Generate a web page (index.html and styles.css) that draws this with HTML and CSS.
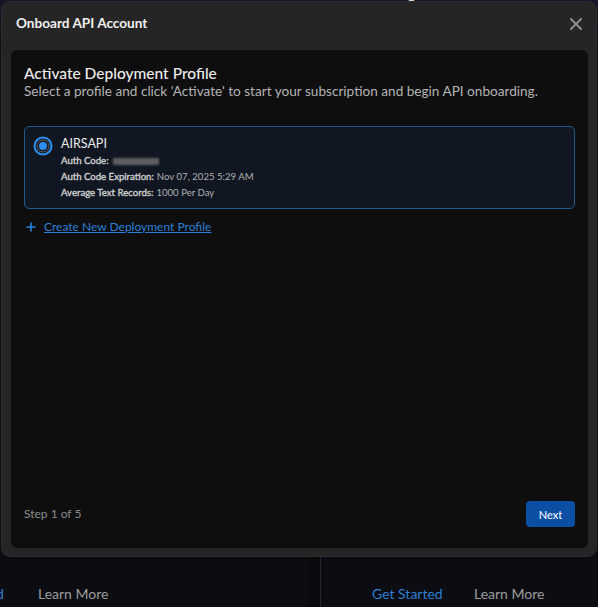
FILE: index.html
```html
<!DOCTYPE html>
<html>
<head>
<meta charset="utf-8">
<link rel="stylesheet" href="styles.css">
</head>
<body>
<div class="page">
  <div class="bg-heading">Start Your Trial Today With API</div>
  <div class="bg-spacer"></div>
  <div class="bg-bottom">
    <div class="bg-col bg-col-left">
      <span class="bg-link">d</span>
      <span class="bg-muted">Learn More</span>
    </div>
    <div class="bg-col bg-col-right">
      <span class="bg-link">Get Started</span>
      <span class="bg-muted">Learn More</span>
    </div>
  </div>
</div>

<div class="modal">
  <div class="modal-header">
    <div class="modal-title">Onboard API Account</div>
    <svg class="close" width="12" height="12" viewBox="0 0 12 12">
      <path d="M1 1 L11 11 M11 1 L1 11" stroke="#8c8c8c" stroke-width="2" stroke-linecap="square"/>
    </svg>
  </div>
  <div class="panel">
    <div class="panel-body">
      <div class="panel-title">Activate Deployment Profile</div>
      <div class="panel-sub">Select a profile and click 'Activate' to start your subscription and begin API onboarding.</div>

      <div class="card">
        <svg class="radio" width="20" height="20" viewBox="0 0 20 20">
          <circle cx="10" cy="10" r="8.5" fill="#15181f" stroke="#2b8ff0" stroke-width="2"/>
          <circle cx="10" cy="10" r="6" fill="#15181f" stroke="#5a6270" stroke-width="1"/>
          <circle cx="10" cy="10" r="4" fill="#2b8ff0"/>
        </svg>
        <div class="card-info">
          <div class="card-name">AIRSAPI</div>
          <div class="card-row"><span class="lbl">Auth Code:</span><span class="blur"></span></div>
          <div class="card-row"><span class="lbl">Auth Code Expiration:</span><span class="val">Nov 07, 2025 5:29 AM</span></div>
          <div class="card-row"><span class="lbl">Average Text Records:</span><span class="val">1000 Per Day</span></div>
        </div>
      </div>

      <div class="create">
        <svg class="plus" width="10" height="10" viewBox="0 0 10 10">
          <path d="M5 0.5 V9.5 M0.5 5 H9.5" stroke="#2a80d6" stroke-width="1.6"/>
        </svg>
        <span class="create-link">Create New Deployment Profile</span>
      </div>
    </div>
    <div class="panel-footer">
      <span class="step">Step 1 of 5</span>
      <button class="next">Next</button>
    </div>
  </div>
</div>
</body>
</html>
```
FILE: styles.css
```css
* { box-sizing: border-box; }
html, body { margin: 0; padding: 0; }
body {
  width: 598px;
  height: 607px;
  overflow: hidden;
  background: #0c0d13;
  font-family: Lato, "Open Sans", sans-serif;
  position: relative;
}
.page {
  width: 598px;
  height: 607px;
  display: flex;
  flex-direction: column;
  background: linear-gradient(#15162a 0, #0c0d13 60px);
}
.bg-heading {
  margin-top: -40px;
  margin-left: 14px;
  font-size: 44px;
  font-weight: 700;
  color: #d8d8d8;
  white-space: nowrap;
  line-height: 44px;
  height: 44px;
  overflow: hidden;
}
.bg-spacer { flex: 1; }
.bg-bottom {
  height: 51px;
  display: flex;
}
.bg-col {
  display: flex;
  align-items: flex-start;
  font-size: 14px;
  line-height: 17px;
  padding-top: 29px;
}
.bg-col-left {
  width: 320px;
  border-right: 13px solid #0a0a0e;
}
.bg-col-left .bg-link { margin-left: -4px; width: 42px; }
.bg-col-right {
  flex: 1;
  border-left: 1px solid #26272e;
  padding-left: 51px;
}
.bg-col-right .bg-link { width: 102px; }
.bg-link { color: #2f7fd2; }
.bg-muted { color: #9c9c9c; }

.modal {
  position: absolute;
  left: 2px;
  top: 2px;
  width: 594px;
  height: 554px;
  background: #252525;
  border-radius: 8px;
  display: flex;
  flex-direction: column;
  padding: 0 8px 8px 9px;
  box-shadow: 0 0 0 1px #2c2c2c;
}
.modal-header {
  height: 48px;
  display: flex;
  align-items: center;
  justify-content: space-between;
  padding-left: 5px;
  padding-right: 6px;
}
.modal-title {
  color: #f0f0f0;
  font-size: 13.6px;
  font-weight: 700;
  margin-top: -6px;
}
.close { margin-top: -4px; }
.panel {
  flex: 1;
  background: #0e0e0e;
  border-radius: 6px;
  display: flex;
  flex-direction: column;
  justify-content: space-between;
  padding: 13px 13px 21px 13px;
}
.panel-title {
  color: #ececec;
  font-size: 15.5px;
  font-weight: 500;
  line-height: 20px;
}
.panel-sub {
  color: #b4b4b4;
  font-size: 13.6px;
  line-height: 16px;
}
.card {
  margin-top: 27px;
  height: 83px;
  background: #111722;
  border: 1px solid #1f5a8a;
  border-radius: 5px;
  display: flex;
  align-items: flex-start;
  padding: 8px 8px 0 8px;
}
.radio { margin-top: 1px; flex: none; }
.card-info { margin-left: 8px; }
.card-name {
  color: #ededed;
  font-size: 12.5px;
  line-height: 18px;
}
.card-row {
  display: flex;
  align-items: center;
  font-size: 9.6px;
  line-height: 16px;
  height: 16px;
}
.lbl {
  color: #d0d0d0;
  font-weight: 400;
  -webkit-text-stroke: 0.35px #d0d0d0;
  margin-right: 3px;
}
.val { color: #b0b0b0; }
.blur {
  display: inline-block;
  width: 46px;
  height: 7px;
  background: #5e5e62;
  filter: blur(1.2px);
  margin-left: 1px;
}
.create {
  display: flex;
  align-items: center;
  margin-top: 10px;
  padding-left: 2px;
}
.plus { margin-top: 1px; }
.create-link {
  color: #2a80d6;
  font-size: 12px;
  text-decoration: underline;
  margin-left: 8px;
}
.panel-footer {
  display: flex;
  align-items: center;
  justify-content: space-between;
}
.step {
  color: #8a8a8a;
  font-size: 12px;
  margin-top: -2px;
}
.next {
  width: 49px;
  height: 26px;
  background: #0b4fa4;
  color: #f2f6ff;
  border: none;
  border-radius: 4px;
  font-family: Lato, sans-serif;
  font-size: 11px;
  font-weight: 500;
  padding: 0;
}
```
